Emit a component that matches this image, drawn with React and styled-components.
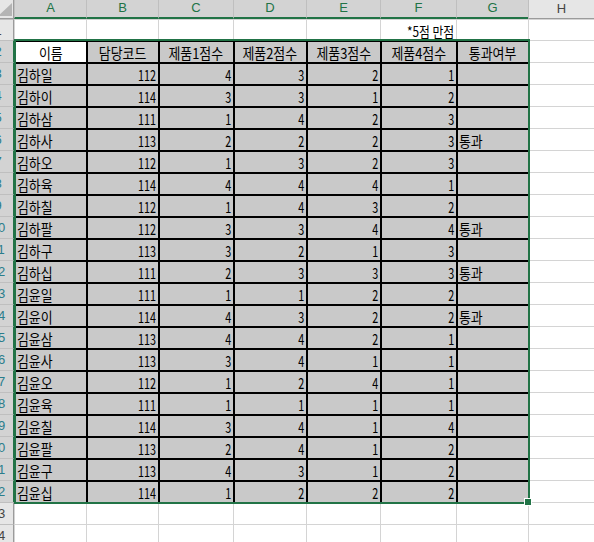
import React from "react";
import styled, { createGlobalStyle } from "styled-components";

const GREEN = "#217346";
const GRID = "#d4d4d4";
const FILL = "#c9c9c9";

const GlobalStyle = createGlobalStyle`
  html, body {
    margin: 0;
    padding: 0;
    background: #fff;
    overflow: hidden;
  }
  body {
    font-family: "Noto Sans CJK KR", "Liberation Sans", sans-serif;
  }
`;

const COLS = ["A", "B", "C", "D", "E", "F", "G", "H"];
const HEADS = ["이름", "담당코드", "제품1점수", "제품2점수", "제품3점수", "제품4점수", "통과여부"];
const ROWS = [
  ["김하일", 112, 4, 3, 2, 1, ""],
  ["김하이", 114, 3, 3, 1, 2, ""],
  ["김하삼", 111, 1, 4, 2, 3, ""],
  ["김하사", 113, 2, 2, 2, 3, "통과"],
  ["김하오", 112, 1, 3, 2, 3, ""],
  ["김하육", 114, 4, 4, 4, 1, ""],
  ["김하칠", 112, 1, 4, 3, 2, ""],
  ["김하팔", 112, 3, 3, 4, 4, "통과"],
  ["김하구", 113, 3, 2, 1, 3, ""],
  ["김하십", 111, 2, 3, 3, 3, "통과"],
  ["김윤일", 111, 1, 1, 2, 2, ""],
  ["김윤이", 114, 4, 3, 2, 2, "통과"],
  ["김윤삼", 113, 4, 4, 2, 1, ""],
  ["김윤사", 113, 3, 4, 1, 1, ""],
  ["김윤오", 112, 1, 2, 4, 1, ""],
  ["김윤육", 111, 1, 1, 1, 1, ""],
  ["김윤칠", 114, 3, 4, 1, 4, ""],
  ["김윤팔", 113, 2, 4, 1, 2, ""],
  ["김윤구", 113, 4, 3, 1, 2, ""],
  ["김윤십", 114, 1, 2, 2, 2, ""],
];

const ORIGIN = { left: "left", right: "right", center: "center" };

const App = () => {
  const cells = [];

  // row 1
  COLS.forEach((c, i) => {
    cells.push(
      <Cell key={`1-${c}`} $r={2} $c={i + 2} $align="right">
        {c === "F" && <Text $origin="right" $narrow>*5점 만점</Text>}
      </Cell>
    );
  });

  // row 2 : table header
  HEADS.forEach((h, i) => {
    cells.push(
      <Cell key={`2-${i}`} $r={3} $c={i + 2} $table $white={i === 0} $align="center">
        <Text $origin="center">{h}</Text>
      </Cell>
    );
  });
  cells.push(<Cell key="2-H" $r={3} $c={9} />);

  // rows 3..22 : data
  ROWS.forEach((row, k) => {
    const r = k + 4;
    row.forEach((v, i) => {
      const isNum = typeof v === "number";
      const align = isNum ? "right" : "left";
      cells.push(
        <Cell key={`${r}-${i}`} $r={r} $c={i + 2} $table $align={align}>
          {v !== "" && (
            <Text $num={isNum} $origin={ORIGIN[align]}>
              {v}
            </Text>
          )}
        </Cell>
      );
    });
    cells.push(<Cell key={`${r}-H`} $r={r} $c={9} />);
  });

  // rows 23, 24
  [24, 25].forEach((r) => {
    COLS.forEach((c, i) => {
      cells.push(<Cell key={`${r}-${c}`} $r={r} $c={i + 2} />);
    });
  });

  return (
    <>
      <GlobalStyle />
      <Sheet>
        <Corner>
          <svg width="13" height="18" viewBox="0 0 13 18">
            <polygon points="-2,16 12,16 12,3" fill="#b4b4b4" />
          </svg>
        </Corner>
        {COLS.map((c, i) => (
          <ColHead key={c} $c={i + 2} $active={i < 7}>
            {c}
          </ColHead>
        ))}
        {Array.from({ length: 24 }, (_, k) => {
          const n = k + 1;
          const active = n >= 2 && n <= 22;
          return (
            <RowHead key={n} $r={n + 1} $active={active}>
              <RowNum $active={active}>{n}</RowNum>
            </RowHead>
          );
        })}
        {cells}
        <Selection>
          <Handle />
        </Selection>
      </Sheet>
    </>
  );
};

const Sheet = styled.div`
  display: grid;
  grid-template-columns: 14px 72px 72px 75px 73px 74px 76px 72px 1fr;
  grid-template-rows: 19px 21px repeat(23, 22px);
  width: 594px;
  height: 542px;
  overflow: hidden;
`;

const Corner = styled.div`
  grid-area: 1 / 1;
  box-sizing: border-box;
  background: #e6e6e6;
  border-right: 1px solid #9b9b9b;
  border-bottom: 1px solid #9b9b9b;
  overflow: hidden;
  svg {
    display: block;
  }
`;

const ColHead = styled.div`
  grid-area: 1 / ${(p) => p.$c};
  box-sizing: border-box;
  display: flex;
  align-items: center;
  justify-content: center;
  padding-bottom: 2px;
  background: ${(p) => (p.$active ? "#d3d3d3" : "#e6e6e6")};
  border-left: 1px solid #bfbfbf;
  border-bottom: ${(p) => (p.$active ? `2px solid ${GREEN}` : "1px solid #9b9b9b")};
  font-family: "Liberation Sans", sans-serif;
  font-size: 13px;
  line-height: 1;
  color: ${(p) => (p.$active ? GREEN : "#444")};
`;

const RowHead = styled.div`
  grid-area: ${(p) => p.$r} / 1;
  box-sizing: border-box;
  display: flex;
  align-items: center;
  overflow: hidden;
  background: ${(p) => (p.$active ? "#d3d3d3" : "#e6e6e6")};
  border-top: 1px solid #bfbfbf;
  border-right: 1px solid ${(p) => (p.$active ? GREEN : "#9b9b9b")};
`;

const RowNum = styled.span`
  flex: 0 0 30px;
  margin-left: -17px;
  text-align: center;
  font-family: "Liberation Sans", sans-serif;
  font-size: 13px;
  line-height: 1;
  color: ${(p) => (p.$active ? "#2a7d8c" : "#444")};
`;

const Cell = styled.div`
  grid-area: ${(p) => p.$r} / ${(p) => p.$c};
  box-sizing: border-box;
  display: flex;
  align-items: center;
  justify-content: ${(p) =>
    p.$align === "right" ? "flex-end" : p.$align === "center" ? "center" : "flex-start"};
  padding: 1px 2px 0 ${(p) => (p.$table ? "1px" : "2px")};
  border-left: ${(p) => (p.$table ? "2px solid #000" : `1px solid ${GRID}`)};
  border-top: ${(p) => (p.$table ? "2px solid #000" : `1px solid ${GRID}`)};
  background: ${(p) => (p.$table && !p.$white ? FILL : "#fff")};
  color: #000;
  overflow: hidden;
`;

const Text = styled.span`
  display: inline-block;
  flex: none;
  font-size: ${(p) => (p.$narrow ? "14px" : "15px")};
  line-height: 1;
  white-space: nowrap;
  transform: scaleX(${(p) => (p.$num ? 0.72 : p.$narrow ? 0.84 : 0.86)});
  transform-origin: ${(p) => p.$origin} center;
`;

const Selection = styled.div`
  grid-area: 3 / 2 / 24 / 9;
  margin: -1px -2px -2px 0;
  border: 2px solid ${GREEN};
  position: relative;
  z-index: 1;
  pointer-events: none;
`;

const Handle = styled.span`
  position: absolute;
  right: -3px;
  bottom: -3px;
  width: 6px;
  height: 6px;
  background: ${GREEN};
  box-shadow: 0 0 0 1px #fff;
`;

export default App;
